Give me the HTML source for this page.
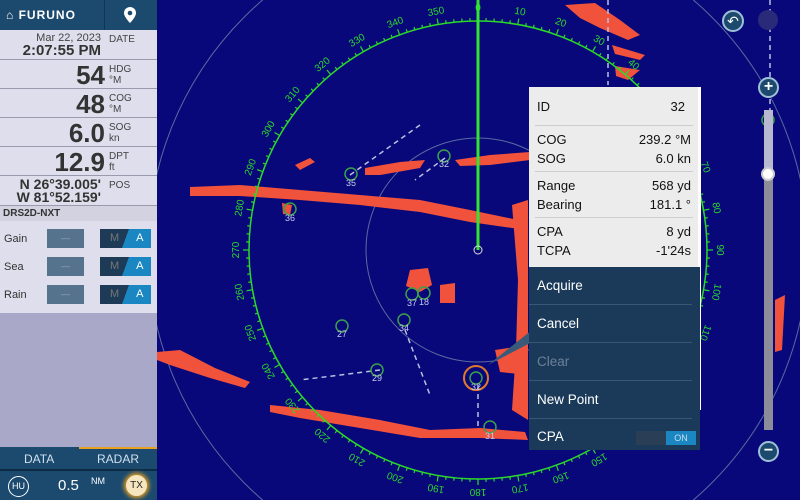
<!DOCTYPE html>
<html><head><meta charset="utf-8"><style>
*{margin:0;padding:0;box-sizing:border-box}
html,body{width:800px;height:500px;overflow:hidden}
body{background:#08087a;font-family:"Liberation Sans",sans-serif;position:relative}
#radar{position:absolute;left:0;top:0}
.lp{position:absolute;left:0;top:0;width:157px;height:500px;background:#a9a8c9}
.hdr{position:absolute;left:0;top:0;width:157px;height:30px;background:#1b4a6e}
.row{position:absolute;left:0;width:157px;background:#dedeec;border-bottom:1px solid #9a9aae}
.big{position:absolute;right:52px;font-weight:bold;color:#333;font-size:26px;line-height:26px}
.unit{position:absolute;left:109px;font-size:10px;color:#444;line-height:11px}
.ctl{position:absolute;left:0;top:221px;width:157px;height:92px;background:#dedeec}
.lbl{position:absolute;left:4px;font-size:11px;color:#333}
.dash{position:absolute;left:47px;width:37px;height:19px;background:#56738e;color:#8fa4b8;font-size:9px;text-align:center;line-height:19px}
.ma{position:absolute;left:100px;width:51px;height:19px;background:linear-gradient(110deg,#1d3b57 50%,#1a86c2 50%);color:#fff;font-size:11px;line-height:19px}
.pop{position:absolute;left:529px;top:87px;width:170px;height:180px;background:#ececec;color:#111;font-size:13px;overflow:hidden}
.pr{display:flex;justify-content:space-between;padding:0 8px;line-height:19px}
.sep{border-top:1px solid #ccc;margin:0 6px}
.menu{position:absolute;left:529px;top:267px;width:171px;height:183px;background:#1b3a5a;color:#fff;font-size:13.5px}
.mi{height:38px;line-height:38px;padding-left:8px;border-bottom:1px solid #3b5673;margin-right:8px}
.rb{position:absolute;border-radius:50%;background:#1b4a6e;border:2px solid #9fc0d6;color:#fff;text-align:center}
</style></head><body>
<svg id="radar" width="800" height="500" viewBox="0 0 800 500">
<rect width="800" height="500" fill="#08087a"/>
<circle cx="478" cy="250" r="330" fill="none" stroke="#5a6aa0" stroke-width="1"/>
<circle cx="478" cy="250" r="112" fill="none" stroke="#5a6aa0" stroke-width="1"/>
<g fill="#f0523c">
<path d="M565 5 L595 3 L620 20 L640 35 L628 40 L600 28 L580 18Z"/>
<path d="M612 45 L645 55 L640 60 L615 54Z"/>
<path d="M615 66 L640 70 L628 80 L616 76Z"/>
<path d="M190 187 L240 185 L300 190 L360 195 L420 200 L470 210 L528 222 L526 230 L470 222 L420 212 L360 205 L300 200 L240 196 L190 196Z"/>
<path d="M455 160 L490 155 L530 152 L530 160 L490 165 L460 166Z"/>
<path d="M365 168 L400 162 L425 160 L420 168 L380 175 L365 175Z"/>
<path d="M295 165 L310 158 L315 162 L300 170Z"/>
<path d="M157 352 L180 350 L215 368 L250 382 L245 388 L210 378 L170 365 L157 360Z"/>
<path d="M270 405 L320 410 L380 420 L430 430 L480 428 L525 432 L528 440 L480 438 L420 438 L360 428 L300 418 L270 412Z"/>
<path d="M410 270 L428 268 L432 285 L420 292 L406 286Z"/>
<path d="M440 285 L455 283 L455 303 L440 303Z"/>
<path d="M512 205 L528 200 L528 420 L512 410 L516 350 L518 280Z"/>
<path d="M495 350 L528 345 L528 375 L500 372Z"/>
<path d="M775 300 L785 295 L782 350 L775 352Z"/>
<path d="M282 203 L292 205 L290 215 L283 214Z"/>
</g>
<g stroke="#b9c0e0" stroke-width="1.5" stroke-dasharray="5 4" fill="none">
<line x1="350" y1="175" x2="420" y2="125"/><line x1="445" y1="158" x2="415" y2="180"/>
<line x1="380" y1="370" x2="300" y2="380"/><line x1="405" y1="330" x2="430" y2="395"/>
<line x1="478" y1="385" x2="478" y2="430"/><line x1="608" y1="0" x2="608" y2="85"/>
<line x1="770" y1="0" x2="770" y2="120"/>
</g>
<g id="ticks" stroke="#2bd92b" stroke-width="1.5" fill="none">
<circle cx="478" cy="250" r="229"/>
</g>
<line id="hl" x1="478" y1="0" x2="478" y2="250" stroke="#33e233" stroke-width="3"/>
<circle cx="478" cy="250" r="4" fill="none" stroke="#ddd"/>
<g fill="none" stroke="#3aa04a" stroke-width="1.5">
<circle cx="444" cy="156" r="6"/><circle cx="351" cy="174" r="6"/><circle cx="290" cy="209" r="6"/>
<circle cx="412" cy="294" r="6"/><circle cx="424" cy="293" r="6"/><circle cx="404" cy="320" r="6"/>
<circle cx="342" cy="326" r="6"/><circle cx="377" cy="370" r="6"/><circle cx="476" cy="378" r="6"/>
<circle cx="490" cy="427" r="6"/><circle cx="768" cy="120" r="6"/>
</g>
<circle cx="476" cy="378" r="12" fill="none" stroke="#e07a2a" stroke-width="2"/>
<g fill="#c8c8f0" font-size="9" font-family="Liberation Sans" text-anchor="middle">
<text x="444" y="167">32</text><text x="351" y="186">35</text><text x="290" y="221">36</text>
<text x="412" y="306">37</text><text x="424" y="305">18</text><text x="404" y="331">34</text>
<text x="342" y="337">27</text><text x="377" y="381">29</text><text x="476" y="390">32</text><text x="490" y="439">31</text>
</g>
<path d="M488 365 L532 330 L532 342Z" fill="#3a5a7a"/>
</svg>
<script>
(function(){var ns="http://www.w3.org/2000/svg",s=document.getElementById('radar');
var g=document.createElementNS(ns,'g');s.insertBefore(g,document.getElementById('hl'));
for(var a=0;a<360;a+=2){var r=a*Math.PI/180,l=a%10==0?6:3;
var ln=document.createElementNS(ns,'line');ln.setAttribute('x1',478+229*Math.sin(r));ln.setAttribute('y1',250-229*Math.cos(r));
ln.setAttribute('x2',478+(229+l)*Math.sin(r));ln.setAttribute('y2',250-(229+l)*Math.cos(r));ln.setAttribute('stroke','#2bd92b');ln.setAttribute('stroke-width','1.2');g.appendChild(ln);
if(a%10==0){var t=document.createElementNS(ns,'text');t.setAttribute('x',478);t.setAttribute('y',250-239);t.setAttribute('text-anchor','middle');t.setAttribute('fill','#2bd92b');t.setAttribute('font-size','10');t.setAttribute('font-family','Liberation Sans');t.setAttribute('transform','rotate('+a+' 478 250)');t.textContent=a==0?'0':a;g.appendChild(t);}}})();
</script>
<div class="lp">
<div class="hdr"><span style="position:absolute;left:6px;top:8px;color:#fff;font-weight:bold;font-size:12px;letter-spacing:1px">⌂ FURUNO</span>
<div style="position:absolute;left:104px;top:0;width:53px;height:30px;border-left:1px solid #123652"></div>
<svg style="position:absolute;left:123px;top:6px" width="14" height="18"><path d="M7 1a6 6 0 0 1 6 6c0 4-6 10-6 10S1 11 1 7a6 6 0 0 1 6-6z" fill="#fff"/><circle cx="7" cy="7" r="2.3" fill="#1b4a6e"/></svg></div>
<div class="row" style="top:30px;height:30px"><span style="position:absolute;right:56px;top:2px;font-size:11px;color:#444">Mar 22, 2023</span><span style="position:absolute;right:56px;top:12px;font-size:15px;font-weight:bold;color:#333">2:07:55 PM</span><span class="unit" style="top:4px">DATE</span></div>
<div class="row" style="top:60px;height:29px"><span class="big" style="top:2px">54</span><span class="unit" style="top:4px">HDG<br>°M</span></div>
<div class="row" style="top:89px;height:29px"><span class="big" style="top:2px">48</span><span class="unit" style="top:4px">COG<br>°M</span></div>
<div class="row" style="top:118px;height:29px"><span class="big" style="top:2px">6.0</span><span class="unit" style="top:4px">SOG<br>kn</span></div>
<div class="row" style="top:147px;height:29px"><span class="big" style="top:2px">12.9</span><span class="unit" style="top:4px">DPT<br>ft</span></div>
<div class="row" style="top:176px;height:30px"><span style="position:absolute;right:56px;top:2px;font-size:14px;font-weight:bold;color:#333;line-height:13px;text-align:right">N 26°39.005'<br>W 81°52.159'</span><span class="unit" style="top:4px">POS</span></div>
<div style="position:absolute;left:0;top:206px;width:157px;height:15px;background:#d2d2e0;font-size:10px;font-weight:bold;color:#333;padding:2px 3px">DRS2D-NXT</div>
<div class="ctl">
<span class="lbl" style="top:12px">Gain</span><div class="dash" style="top:8px">—</div><div class="ma" style="top:8px"><span style="margin-left:10px;color:#777">M</span><span style="margin-left:17px">A</span></div>
<span class="lbl" style="top:40px">Sea</span><div class="dash" style="top:36px">—</div><div class="ma" style="top:36px"><span style="margin-left:10px;color:#777">M</span><span style="margin-left:17px">A</span></div>
<span class="lbl" style="top:68px">Rain</span><div class="dash" style="top:64px">—</div><div class="ma" style="top:64px"><span style="margin-left:10px;color:#777">M</span><span style="margin-left:17px">A</span></div>
</div>
<div style="position:absolute;left:0;top:447px;width:157px;height:22px;background:#1b4a6e;color:#cfe0ee;font-size:12px"><span style="position:absolute;left:24px;top:5px">DATA</span><span style="position:absolute;left:97px;top:5px">RADAR</span><div style="position:absolute;left:79px;top:0;width:78px;height:2px;background:#e8a020"></div></div>
<div style="position:absolute;left:0;top:469px;width:157px;height:31px;background:#1b4a6e;border-top:2px solid #0d2a45;color:#fff">
<div style="position:absolute;left:8px;top:5px;width:21px;height:21px;border:1.5px solid #fff;border-radius:50%;font-size:9px;text-align:center;line-height:18px">HU</div>
<span style="position:absolute;left:58px;top:6px;font-size:15px">0.5</span><span style="position:absolute;left:91px;top:5px;font-size:9px">NM</span>
<div style="position:absolute;left:126px;top:4px;width:21px;height:21px;border-radius:50%;background:#f6e6c0;box-shadow:0 0 4px 2px #e8a020;color:#222;font-size:10px;text-align:center;line-height:21px">TX</div></div>
</div>
<div class="pop">
<div class="pr" style="padding-top:10px;padding-bottom:9px"><span>ID</span><span style="margin-right:6px">32</span></div><div class="sep"></div>
<div style="padding:4px 0 3px"><div class="pr"><span>COG</span><span>239.2 °M</span></div><div class="pr"><span>SOG</span><span>6.0 kn</span></div></div><div class="sep"></div>
<div style="padding:4px 0 3px"><div class="pr"><span>Range</span><span>568 yd</span></div><div class="pr"><span>Bearing</span><span>181.1 °</span></div></div><div class="sep"></div>
<div style="padding:4px 0 0"><div class="pr"><span>CPA</span><span>8 yd</span></div><div class="pr"><span>TCPA</span><span>-1'24s</span></div></div>
</div>
<div style="position:absolute;left:698px;top:87px;width:3px;height:323px;background:#fff"></div>
<div class="menu">
<div class="mi">Acquire</div><div class="mi">Cancel</div><div class="mi" style="color:#6c8098">Clear</div><div class="mi">New Point</div>
<div style="height:30px;line-height:36px;padding-left:8px">CPA<div style="position:absolute;left:107px;top:164px;width:60px;height:14px;background:#2a3e55"><div style="position:absolute;right:0;top:0;width:30px;height:14px;background:#1a86c2;color:#cde;font-size:9px;line-height:14px;text-align:center">ON</div></div></div>
</div>
<div class="rb" style="left:722px;top:10px;width:22px;height:22px;font-size:14px;line-height:18px">↶</div>
<div style="position:absolute;left:758px;top:10px;width:20px;height:20px;border-radius:50%;background:#2a2a7a"></div>
<div class="rb" style="left:758px;top:77px;width:21px;height:21px;font-size:16px;line-height:16px;font-weight:bold">+</div>
<div style="position:absolute;left:764px;top:110px;width:9px;height:320px;background:#8c8c9a"></div>
<div style="position:absolute;left:764px;top:110px;width:9px;height:62px;background:#b8b8d0"></div>
<div style="position:absolute;left:761px;top:167px;width:14px;height:14px;border-radius:50%;background:#fff;border:2px solid #ccc"></div>
<div class="rb" style="left:758px;top:441px;width:21px;height:21px;font-size:16px;line-height:16px;font-weight:bold">−</div>
</body></html>
